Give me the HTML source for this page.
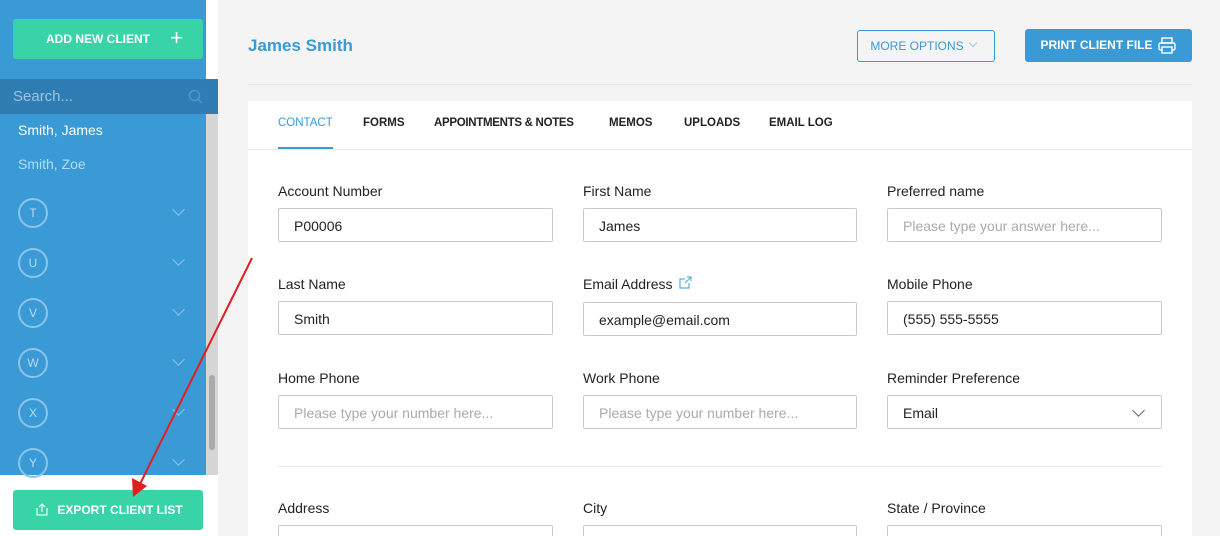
<!DOCTYPE html>
<html style="width:1220px;height:536px;overflow:hidden"><head><style>
*{box-sizing:border-box;margin:0;padding:0}
body{width:1220px;height:536px;overflow:hidden;font-family:"Liberation Sans",sans-serif;background:#f4f4f4;position:relative}
.sb{position:absolute;left:0;top:0;width:218px;height:536px;background:#fff}
.blue{position:absolute;left:0;top:0;width:206px;height:475px;background:#3a9ad6}
.scroll{position:absolute;left:206px;top:114px;width:12px;height:361px;background:#d6d6d6}
.thumb{position:absolute;left:209px;top:375px;width:6px;height:75px;background:#aaa;border-radius:3px}
.btn{position:absolute;color:#fff;font-weight:bold;font-size:12px;text-align:center;border-radius:3px}
.search{position:absolute;left:0;top:79px;width:218px;height:35px;background:#2f7db3;color:#9cc4e0;font-size:15px;padding:9px 13px}
.name{position:absolute;left:18px;font-size:14px}
.circ{position:absolute;left:18px;width:30px;height:30px;border:2px solid #8cc3e8;border-radius:50%;color:#b8dbf2;font-size:12px;text-align:center;line-height:26px}
.chev{position:absolute;left:174px;width:9px;height:9px;border-right:1.5px solid #8cc3e8;border-bottom:1.5px solid #8cc3e8;transform:rotate(45deg)}
.card{position:absolute;left:248px;top:101px;width:944px;height:440px;background:#fff}
.tab{position:absolute;top:117px;font-size:11.5px;font-weight:bold;color:#222}
.lbl{position:absolute;font-size:14px;color:#222}
.in{position:absolute;width:275px;height:34px;border:1px solid #c9c9c9;border-radius:2px;font-size:14px;padding:9px 15px;color:#222}
.ph{color:#aaa}
</style></head><body>
<div class="sb">
<div class="blue"></div>
<div class="btn" style="left:13px;top:19px;width:190px;height:40px;background:#38d4a8;line-height:40px;padding-right:20px">ADD NEW CLIENT<span style="position:absolute;right:20px;font-weight:normal;font-size:22px;top:-1px">+</span></div>
<div class="search">Search...<svg style="position:absolute;right:14px;top:10px" width="16" height="16"><circle cx="6.5" cy="6.5" r="5" fill="none" stroke="#4c98cc" stroke-width="1.5"/><line x1="10" y1="10" x2="14" y2="14" stroke="#4c98cc" stroke-width="1.5"/></svg></div>
<div class="name" style="top:122px;color:#fff">Smith, James</div>
<div class="name" style="top:156px;color:#b8dbf2">Smith, Zoe</div>
<div class="circ" style="top:198px">T</div><div class="chev" style="top:205px"></div>
<div class="circ" style="top:248px">U</div><div class="chev" style="top:255px"></div>
<div class="circ" style="top:298px">V</div><div class="chev" style="top:305px"></div>
<div class="circ" style="top:348px">W</div><div class="chev" style="top:355px"></div>
<div class="circ" style="top:398px">X</div><div class="chev" style="top:405px"></div>
<div class="circ" style="top:448px">Y</div><div class="chev" style="top:455px"></div>
<div class="scroll"></div><div class="thumb"></div>
<div class="btn" style="left:13px;top:490px;width:190px;height:40px;background:#38d4a8;line-height:40px;padding-left:24px">EXPORT CLIENT LIST
<svg style="position:absolute;left:23px;top:13px" width="12" height="13"><path d="M1 5v7h10V5M6 9V1M3 4l3-3 3 3" fill="none" stroke="#d9fff2" stroke-width="1.3"/></svg></div>
</div>
<div style="position:absolute;left:248px;top:36px;color:#3a9ad6;font-size:17px;font-weight:bold">James Smith</div>
<div class="btn" style="left:857px;top:30px;width:138px;height:32px;border:1px solid #3a9ad6;color:#3a9ad6;font-weight:normal;line-height:30px;padding-right:18px">MORE OPTIONS<span style="position:absolute;right:18px;top:9px;width:6px;height:6px;border-right:1px solid #9cc4e0;border-bottom:1px solid #9cc4e0;transform:rotate(45deg)"></span></div>
<div class="btn" style="left:1025px;top:29px;width:167px;height:33px;background:#3a9ad6;line-height:33px;padding-right:24px">PRINT CLIENT FILE
<svg style="position:absolute;right:16px;top:8px" width="18" height="17"><rect x="4" y="1" width="10" height="5" fill="none" stroke="#fff" stroke-width="1.4"/><rect x="1" y="6" width="16" height="7" rx="1.5" fill="none" stroke="#fff" stroke-width="1.4"/><rect x="4" y="10" width="10" height="6" fill="#3a9ad6" stroke="#fff" stroke-width="1.4"/></svg></div>
<div style="position:absolute;left:248px;top:84px;width:944px;height:1px;background:#e4e4e4"></div>
<div class="card">
<div style="position:absolute;left:0;top:48px;width:944px;height:1px;background:#e8e8e8"></div>
<div style="position:absolute;left:30px;top:46px;width:55px;height:2px;background:#3a9ad6"></div>
<div style="position:absolute;left:30px;top:365px;width:884px;height:1px;background:#e8e8e8"></div>
</div>
<div class="tab" style="left:278px;color:#3a9ad6;font-weight:normal">CONTACT</div>
<div class="tab" style="left:363px">FORMS</div>
<div class="tab" style="left:434px;letter-spacing:-0.3px">APPOINTMENTS &amp; NOTES</div>
<div class="tab" style="left:609px">MEMOS</div>
<div class="tab" style="left:684px">UPLOADS</div>
<div class="tab" style="left:769px">EMAIL LOG</div>

<div class="lbl" style="left:278px;top:183px">Account Number</div>
<div class="lbl" style="left:583px;top:183px">First Name</div>
<div class="lbl" style="left:887px;top:183px">Preferred name</div>
<div class="in" style="left:278px;top:208px">P00006</div>
<div class="in" style="left:583px;top:208px;width:274px">James</div>
<div class="in ph" style="left:887px;top:208px">Please type your answer here...</div>

<div class="lbl" style="left:278px;top:276px">Last Name</div>
<div class="lbl" style="left:583px;top:276px">Email Address <svg width="13" height="13" style="margin-left:3px"><path d="M10 7v5H1V3h5M8 1h4v4M12 1L6 7" fill="none" stroke="#5aaee0" stroke-width="1.2"/></svg></div>
<div class="lbl" style="left:887px;top:276px">Mobile Phone</div>
<div class="in" style="left:278px;top:301px">Smith</div>
<div class="in" style="left:583px;top:302px;width:274px">example@email.com</div>
<div class="in" style="left:887px;top:301px">(555) 555-5555</div>

<div class="lbl" style="left:278px;top:370px">Home Phone</div>
<div class="lbl" style="left:583px;top:370px">Work Phone</div>
<div class="lbl" style="left:887px;top:370px">Reminder Preference</div>
<div class="in ph" style="left:278px;top:395px">Please type your number here...</div>
<div class="in ph" style="left:583px;top:395px;width:274px">Please type your number here...</div>
<div class="in" style="left:887px;top:395px">Email<span style="position:absolute;right:18px;top:10px;width:9px;height:9px;border-right:1.3px solid #666;border-bottom:1.3px solid #666;transform:rotate(45deg)"></span></div>

<div class="lbl" style="left:278px;top:500px">Address</div>
<div class="lbl" style="left:583px;top:500px">City</div>
<div class="lbl" style="left:887px;top:500px">State / Province</div>
<div class="in" style="left:278px;top:525px"></div>
<div class="in" style="left:583px;top:525px;width:274px"></div>
<div class="in" style="left:887px;top:525px"></div>

<svg style="position:absolute;left:0;top:0" width="1220" height="536"><line x1="252" y1="258" x2="140" y2="484" stroke="#e02020" stroke-width="2"/><polygon points="133,497 132,478 147,486" fill="#e02020"/></svg>
</body></html>
